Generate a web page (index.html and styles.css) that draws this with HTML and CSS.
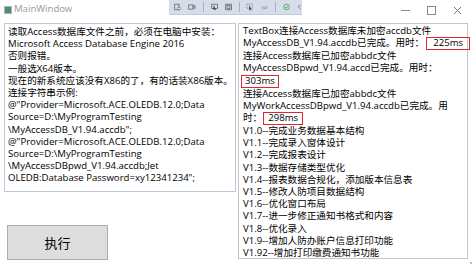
FILE: index.html
```html
<!DOCTYPE html>
<html lang="zh-CN">
<head>
  <meta charset="UTF-8">
  <title>MainWindow</title>
  <link rel="stylesheet" href="styles.css">
</head>
<body>
  <div class="title-bar">
    <span class="app-icon"></span>
    <span class="title-text">MainWindow</span>

    <div class="debug-toolbar">
      <svg class="tool" width="10" height="10" viewBox="0 0 10 10"><rect x="1" y="1" width="6" height="8" fill="none" stroke="#555" stroke-width="1"/><circle cx="7" cy="7" r="2" fill="#fff" stroke="#555"/></svg>
      <svg class="tool" width="11" height="10" viewBox="0 0 11 10"><rect x="1" y="2" width="6" height="6" fill="none" stroke="#555"/><path d="M7 4 L10 3 L10 7 L7 6" fill="none" stroke="#555"/></svg>
      <span class="sep"></span>
      <svg class="tool" width="10" height="10" viewBox="0 0 10 10"><rect x="1" y="1" width="8" height="6" fill="none" stroke="#555"/><path d="M4 3 L4 9 L5.5 7.5 L7 9.5" fill="#333" stroke="#333" stroke-width="0.8"/></svg>
      <svg class="tool" width="10" height="10" viewBox="0 0 10 10"><rect x="1" y="1" width="8" height="8" fill="none" stroke="#555"/><rect x="3" y="3" width="4" height="4" fill="none" stroke="#555"/></svg>
      <span class="sep"></span>
      <svg class="tool" width="11" height="10" viewBox="0 0 11 10"><rect x="1" y="1" width="8" height="6" fill="none" stroke="#777" stroke-dasharray="1.5 1"/><path d="M5 3 L5 9.5 L6.5 8 L8 10" fill="#333" stroke="#333" stroke-width="0.8"/></svg>
      <svg class="tool" width="10" height="10" viewBox="0 0 10 10"><text x="5" y="7.5" font-size="6" text-anchor="middle" fill="#555" font-family="DejaVu Sans">(o)</text></svg>
      <span class="sep"></span>
      <svg class="tool" width="10" height="10" viewBox="0 0 10 10"><circle cx="5" cy="5" r="4" fill="none" stroke="#3a9a3a"/><path d="M3 5 L4.5 6.5 L7 3.5" fill="none" stroke="#3a9a3a" stroke-width="1.1"/></svg>
      <svg class="tool" width="7" height="10" viewBox="0 0 7 10"><path d="M5 2 L2 5 L5 8" fill="none" stroke="#555"/></svg>
    </div>

    <div class="window-controls">
      <span class="ctl ctl-min"></span>
      <span class="ctl ctl-max"></span>
      <svg class="ctl-close" width="9" height="9" viewBox="0 0 9 9"><path d="M1 1 L8 8 M8 1 L1 8" stroke="#777" stroke-width="1"/></svg>
    </div>
  </div>

  <div class="content">
    <div class="left-col">
      <div class="text-box left-box">
        <div>读取Access数据库文件之前，必须在电脑中安装：</div>
        <div>Microsoft Access Database Engine 2016</div>
        <div>否则报错。</div>
        <div>一般选X64版本。</div>
        <div>现在的新系统应该没有X86的了，有的话装X86版本。</div>
        <div>连接字符串示例:</div>
        <div>@"Provider=Microsoft.ACE.OLEDB.12.0;Data</div>
        <div>Source=D:\MyProgramTesting</div>
        <div>\MyAccessDB_V1.94.accdb";</div>
        <div>@"Provider=Microsoft.ACE.OLEDB.12.0;Data</div>
        <div>Source=D:\MyProgramTesting</div>
        <div>\MyAccessDBpwd_V1.94.accdb;Jet</div>
        <div>OLEDB:Database Password=xy12341234";</div>
      </div>

      <div class="button-row">
        <button class="run-button">执行</button>
      </div>
    </div>

    <div class="text-box right-box">
      <div class="lines">
        <div>TextBox连接Access数据库未加密accdb文件</div>
        <div>MyAccessDB_V1.94.accdb已完成。用时：<span class="mark mark-1">225ms</span></div>
        <div>连接Access数据库已加密abbdc文件</div>
        <div>MyAccessDBpwd_V1.94.accd已完成。用时：</div>
        <div><span class="mark mark-2">303ms</span></div>
        <div>连接Access数据库已加密abbdc文件</div>
        <div>MyWorkAccessDBpwd_V1.94.accdb已完成。用</div>
        <div>时：<span class="mark mark-3">298ms</span></div>
        <div>V1.0--完成业务数据基本结构</div>
        <div>V1.1--完成录入窗体设计</div>
        <div>V1.2--完成报表设计</div>
        <div>V1.3--数据存储类型优化</div>
        <div>V1.4--报表数据合规化，添加版本信息表</div>
        <div>V1.5--修改人防项目数据结构</div>
        <div>V1.6--优化窗口布局</div>
        <div>V1.7--进一步修正通知书格式和内容</div>
        <div>V1.8--优化录入</div>
        <div>V1.9--增加人防办账户信息打印功能</div>
        <div>V1.92--增加打印缴费通知书功能</div>
        <div>V1.93--增加打印人防办账户信息功能</div>
      </div>
    </div>
  </div>

  <span class="grip"></span>
</body>
</html>
```

FILE: styles.css
```css
body{
  margin: 0;
  width: 474px;
  height: 267px;
  overflow: hidden;
  background-color: #fff;
  font-family: "Open Sans", "Noto Sans CJK SC", sans-serif;
  color: #000;
  position: relative;
}

.title-bar{
  display: flex;
  align-items: flex-start;
  height: 21px;
}

.app-icon{
  flex-shrink: 0;
  width: 6px;
  height: 6px;
  margin-left: 4px;
  margin-top: 6px;
  background-color: #5a8a6a;
  border: 1px solid #9bb;
}

.title-text{
  flex-shrink: 0;
  width: 50px;
  margin-left: 2px;
  margin-top: 2px;
  font-size: 9.5px;
  color: #a0a0a0;
  font-family: "Noto Sans", sans-serif;
  white-space: nowrap;
}

.debug-toolbar{
  flex-shrink: 0;
  display: flex;
  align-items: center;
  gap: 7px;
  margin-left: 105px;
  height: 15px;
  width: 133px;
  padding-left: 5px;
  box-sizing: border-box;
  background-color: #d7dcea;
  border-bottom: 1px solid #c3c9d9;
}

.tool{
  display: block;
}

.sep{
  width: 1px;
  height: 10px;
  background-color: #a9b0c2;
}

.window-controls{
  display: flex;
  align-items: center;
  margin-left: auto;
  margin-right: 12px;
  margin-top: 6px;
  gap: 17px;
}

.ctl{
  display: block;
}

.ctl-min{
  width: 9px;
  height: 1px;
  background-color: #888;
}

.ctl-max{
  width: 7px;
  height: 7px;
  border: 1px solid #888;
}

.ctl-close{
  display: block;
}

.content{
  display: flex;
  align-items: flex-start;
  margin-top: 2px;
  padding-left: 4px;
}

.left-col{
  display: flex;
  flex-direction: column;
  justify-content: space-between;
  height: 237px;
  width: 232px;
  flex-shrink: 0;
}

.text-box{
  box-sizing: border-box;
  font-size: 9.6px;
  line-height: 12.2px;
  white-space: nowrap;
  padding: 2px 2px;
}

.left-box{
  flex-shrink: 0;
  height: 169px;
  border: 1px solid #bccbdc;
  padding-left: 3px;
  overflow: hidden;
}

.right-box{
  flex-shrink: 0;
  margin-left: 2px;
  width: 230px;
  height: 236px;
  border: 1px solid #c5c5c5;
  padding-top: 1px;
  padding-left: 4px;
}

.lines{
  height: 233px;
  overflow-x: visible;
  overflow-y: clip;
}

.mark{
  display: inline-block;
  box-sizing: border-box;
  height: 13px;
  border: 1.5px solid #e0282c;
  line-height: 10px;
  padding: 0 4px;
  vertical-align: top;
}

.mark-1{
  width: 44px;
  margin-left: 2px;
  padding-left: 6px;
}

.mark-2{
  width: 38px;
  margin-left: -2px;
  padding-left: 3px;
}

.mark-3{
  width: 40px;
  margin-left: 1px;
  padding-left: 4px;
}

.button-row{
  flex-shrink: 0;
  height: 35px;
  padding-left: 3px;
}

.run-button{
  width: 101px;
  height: 35px;
  margin: 0;
  background-color: #dddddd;
  border: 1px solid #adadad;
  font-family: "Noto Sans CJK SC", sans-serif;
  font-size: 13px;
  color: #000;
  padding: 0;
}

.grip{
  position: absolute;
  right: 2px;
  bottom: 3px;
  width: 2px;
  height: 2px;
  background-color: #bbb;
}
```
